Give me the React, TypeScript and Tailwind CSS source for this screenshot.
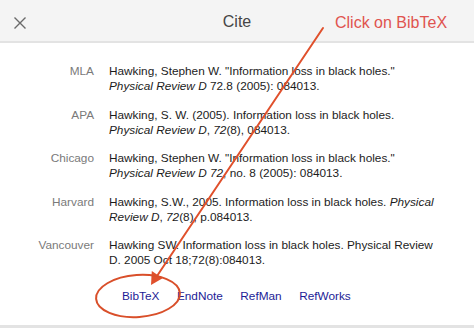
import React from "react";

const FONT = { fontFamily: '"Liberation Sans", Arial, Helvetica, sans-serif' };

type Citation = { label: string; lines: React.ReactNode[] };

const CITATIONS: Citation[] = [
  {
    label: "MLA",
    lines: [
      <>Hawking, Stephen W. "Information loss in black holes."</>,
      <><i>Physical Review D</i> 72.8 (2005): 084013.</>,
    ],
  },
  {
    label: "APA",
    lines: [
      <>Hawking, S. W. (2005). Information loss in black holes.</>,
      <><i>Physical Review D</i>, <i>72</i>(8), 084013.</>,
    ],
  },
  {
    label: "Chicago",
    lines: [
      <>Hawking, Stephen W. "Information loss in black holes."</>,
      <><i>Physical Review D 72</i>, no. 8 (2005): 084013.</>,
    ],
  },
  {
    label: "Harvard",
    lines: [
      <>Hawking, S.W., 2005. Information loss in black holes. <i>Physical</i></>,
      <><i>Review D</i>, <i>72</i>(8), p.084013.</>,
    ],
  },
  {
    label: "Vancouver",
    lines: [
      <>Hawking SW. Information loss in black holes. Physical Review</>,
      <>D. 2005 Oct 18;72(8):084013.</>,
    ],
  },
];

const LINKS = ["BibTeX", "EndNote", "RefMan", "RefWorks"];

export default function App() {
  return (
    <div className="relative w-[474px] h-[328px] bg-white overflow-hidden flex flex-col" style={FONT}>
      {/* Header */}
      <div className="h-[43px] shrink-0 bg-[#f4f4f4] border-b-2 border-[#e3e3e3] flex items-center justify-center pt-[3px] relative">
        <svg className="absolute left-[14px] top-[17px]" width="12" height="12" viewBox="0 0 12 12">
          <path d="M0.5 0.5 L11.5 11.5 M11.5 0.5 L0.5 11.5" stroke="#6a6a6a" strokeWidth="1.4" fill="none" />
        </svg>
        <span className="text-[16px] text-[#454545] leading-none">Cite</span>
      </div>

      {/* Citations */}
      <div className="flex flex-col gap-[13.5px] pt-[21px]">
        {CITATIONS.map((c) => (
          <div key={c.label} className="flex gap-[15px] text-[11.8px] leading-[15px]">
            <div className="w-[94px] shrink-0 text-right text-[#7a7a7a]">{c.label}</div>
            <div className="text-[#1c1c1c] whitespace-nowrap">
              {c.lines.map((l, i) => (
                <div key={i}>{l}</div>
              ))}
            </div>
          </div>
        ))}
      </div>

      {/* Export links */}
      <div className="flex gap-[17.5px] pl-[122px] mt-[21px] text-[11.8px] leading-[15px] text-[#1c1c96]">
        {LINKS.map((l) => (
          <span key={l}>{l}</span>
        ))}
      </div>

      <div className="mt-auto h-[3px] bg-[#e3e3e3]" />

      {/* Annotation */}
      <span className="absolute left-[335px] top-[14px] text-[16px] leading-[18px] text-[#e0534f]">
        Click on BibTeX
      </span>
      <svg className="absolute inset-0 pointer-events-none" width="474" height="328" viewBox="0 0 474 328">
        <line x1="323" y1="28" x2="155" y2="279" stroke="#e0502c" strokeWidth="2" strokeLinecap="round" />
        <polygon points="151,285 162.6,278.2 151.8,271" fill="#e0502c" />
        <ellipse
          cx="138"
          cy="296"
          rx="42"
          ry="21"
          transform="rotate(-4 138 296)"
          fill="none"
          stroke="#d94f2a"
          strokeWidth="2"
        />
      </svg>
    </div>
  );
}
